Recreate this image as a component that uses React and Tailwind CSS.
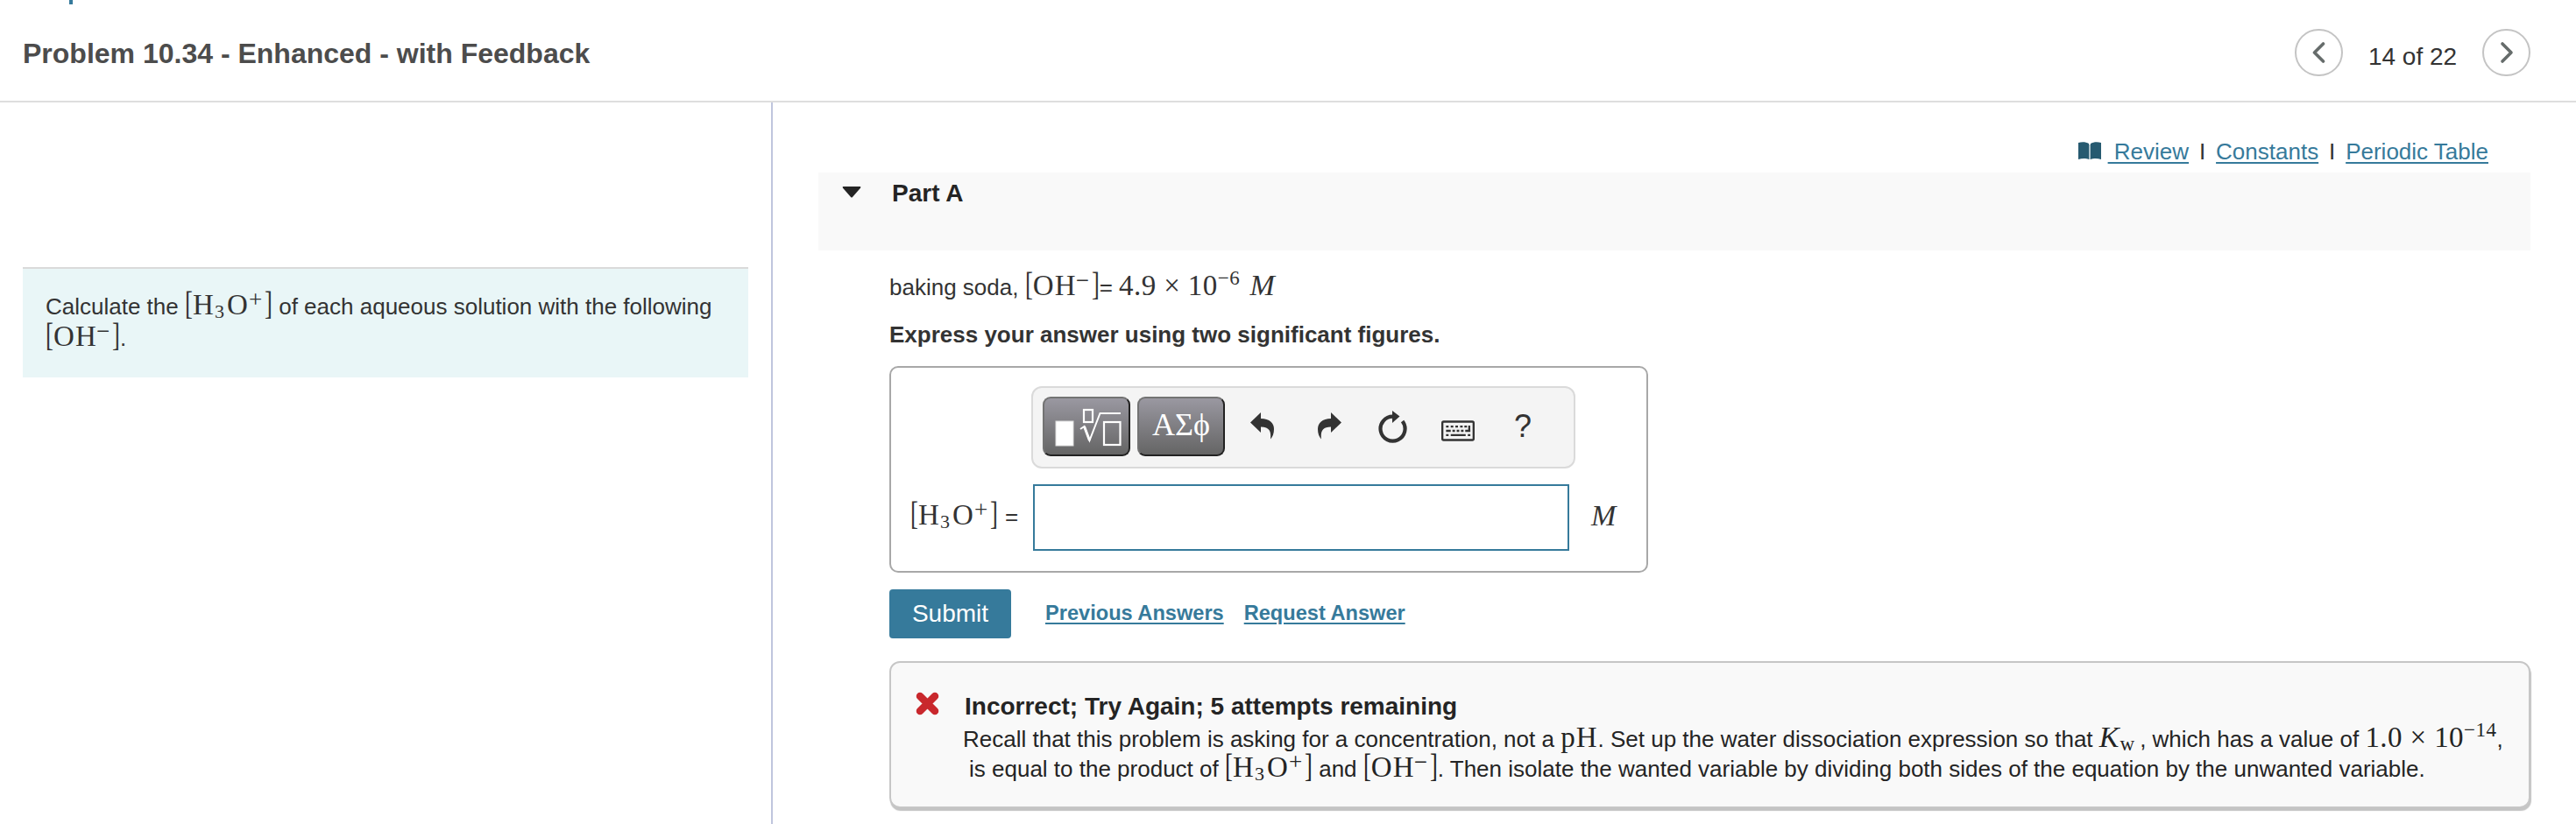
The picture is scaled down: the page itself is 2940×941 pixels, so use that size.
const Bracket = ({ children }) => (
  <span className="inline-block w-[9px] origin-left scale-x-[0.72] text-[37px] leading-0">
    {children}
  </span>
);

const Sup = ({ children }) => (
  <span className="relative -top-3 text-[23px] tracking-[0.5px] leading-0">
    {children}
  </span>
);

const Formula = ({ children }) => (
  <span className="whitespace-nowrap font-['Liberation_Serif',serif] text-[33px] leading-0">
    {children}
  </span>
);

const Hydronium = () => (
  <Formula>
    <Bracket>[</Bracket>
    <span className="inline-block w-[25px]">H</span>
    <span className="relative top-1 inline-block w-[14px] text-[22px]">3</span>
    <span className="inline-block w-[25px]">O</span>
    <span className="relative -top-2 inline-block w-[18px] text-[27px]">+</span>
    <Bracket>]</Bracket>
  </Formula>
);

const Hydroxide = () => (
  <Formula>
    <Bracket>[</Bracket>
    <span className="inline-block w-[25px]">O</span>
    <span className="inline-block w-[24px]">H</span>
    <span className="relative -top-2 inline-block w-[18px] text-[27px]">−</span>
    <Bracket>]</Bracket>
  </Formula>
);

const NavButton = ({ d, label }) => (
  <button
    aria-label={label}
    className="flex h-[54px] w-[55px] items-center justify-center rounded-full border-2 border-[#c4c4c4]"
  >
    <svg width="16" height="26" viewBox="0 0 16 26" fill="none">
      <path
        d={d}
        stroke="#666c6b"
        strokeWidth="3.6"
        strokeLinecap="round"
        strokeLinejoin="round"
      />
    </svg>
  </button>
);

const Header = () => (
  <header className="flex h-[117px] justify-between border-b-2 border-[#dedede] pl-[26px] pr-[52px]">
    <div>
      <div className="ml-[53px] h-[5px] w-1 bg-[#367a9b]"></div>
      <h1 className="mt-[38px] text-[32px] leading-9 font-bold text-[#4c4c4c]">
        Problem 10.34 - Enhanced - with Feedback
      </h1>
    </div>
    <div className="mt-[33px] flex h-[54px]">
      <NavButton label="Previous" d="M12.5 3 L2.5 13 L12.5 23" />
      <span className="w-[159px] pt-[5px] text-center text-[28px] leading-[54px]">
        14 of 22
      </span>
      <NavButton label="Next" d="M3 3 L13 13 L3 23" />
    </div>
  </header>
);

const Prompt = () => (
  <aside className="h-[824px] w-[882px] shrink-0 border-r-2 border-[#bfc5dd] pl-[26px] pt-[188px]">
    <div className="h-[126px] w-[828px] border-t-2 border-[#dadada] bg-[#e9f6f7] pl-[26px] pt-[25px] text-[26px] leading-9">
      <p>
        Calculate the <Hydronium /> of each aqueous solution with the following
      </p>
      <p>
        <Hydroxide />.
      </p>
    </div>
  </aside>
);

const linkStyle =
  "text-[#367a9b] underline decoration-2 underline-offset-[3px]";

const Resources = () => (
  <nav className="flex h-[80px] items-start justify-end pr-[48px] pt-[38px] text-[26px] leading-9">
    <svg
      className="mr-[8px] mt-[7px]"
      width="26"
      height="21"
      viewBox="0 0 26 21"
      fill="#265a70"
    >
      <path d="M0 1 C4 -0.3 9 0 12 2 V20 C9 18.6 4 18.6 0 20 Z" />
      <path d="M26 1 C22 -0.3 17 0 14 2 V20 C17 18.6 22 18.6 26 20 Z" />
      <path d="M12 3 H14 V20 H12 Z" fill="#a9bfc8" />
    </svg>
    <a className={`${linkStyle} whitespace-pre`}> Review</a>
    <span className="w-[31px] text-center">I</span>
    <a className={linkStyle}>Constants</a>
    <span className="w-[31px] text-center">I</span>
    <a className={linkStyle}>Periodic Table</a>
  </nav>
);

const PartHeader = () => (
  <div className="flex h-[89px] bg-[#f9f9f9] pl-[27px] pt-[3px]">
    <svg className="mt-[13px]" width="22" height="13" viewBox="0 0 22 13">
      <path
        d="M1.5 0 H20.5 Q22 0 21 1.8 L12 12 Q11 13 10 12 L1 1.8 Q0 0 1.5 0 Z"
        fill="#242424"
      />
    </svg>
    <h2 className="ml-[35px] text-[28px] leading-[42px] font-bold text-[#242424]">
      Part A
    </h2>
  </div>
);

const keyStyle =
  "flex h-[68px] w-[100px] items-center justify-center rounded-[9px] border-2 border-t-[#737373] border-l-[#737373] border-r-[#222] border-b-[#222] bg-linear-to-b from-[#9a98a1] to-[#656565]";

const UndoArrow = ({ className }) => (
  <svg className={className} width="27" height="31" viewBox="0 0 27 31" fill="#333">
    <path d="M0 11.5 L12 0 V7 C22 7 27 12 27 19 C27 24 25.5 28 23 30.5 C24 22 22 16.5 12 16.5 V23 Z" />
  </svg>
);

const Toolbar = () => (
  <div className="ml-[160px] flex h-[94px] w-[621px] items-start rounded-[12px] border-2 border-[#dadada] bg-[#f4f4f4] pl-[11px] pt-[10px]">
    <button className={keyStyle}>
      <svg
        className="ml-[3px] mt-px"
        width="76"
        height="44"
        viewBox="0 0 76 44"
        fill="none"
        stroke="#fff"
      >
        <rect x="1" y="15" width="20" height="28" fill="#fff" stroke="#ddd" />
        <rect x="33" y="2" width="10" height="14" strokeWidth="2.2" />
        <path d="M29 24 L33.5 21 L39.5 37 L51.5 6 H75" strokeWidth="2" />
        <path d="M33.5 21 L39.5 37" strokeWidth="3" />
        <rect x="56" y="16" width="18.5" height="26" strokeWidth="2.2" />
      </svg>
    </button>
    <button
      className={`${keyStyle} ml-[8px] pb-[4px] font-['Liberation_Serif',serif] text-[36px] leading-none text-white`}
    >
      ΑΣϕ
    </button>
    <UndoArrow className="ml-[29px] mt-[18px]" />
    <UndoArrow className="ml-[50px] mt-[18px] -scale-x-100" />
    <svg className="ml-[42px] mt-[16px]" width="33" height="37" viewBox="0 0 33 37">
      <path
        d="M27.6 12 A14 14 0 1 1 17 6.6"
        fill="none"
        stroke="#333"
        strokeWidth="4.2"
      />
      <path d="M16 0 L24.5 6.5 L16 14 Z" fill="#333" />
    </svg>
    <svg className="ml-[39px] mt-[27px]" width="38" height="24" viewBox="0 0 39 24">
      <rect
        x="1.2"
        y="1.2"
        width="36.6"
        height="21.6"
        rx="1.5"
        fill="none"
        stroke="#333"
        strokeWidth="2.4"
      />
      <path
        d="M5.5 7 H8.5 M11 7 H14 M16.5 7 H19.5 M22 7 H25 M27 7 H30 M5.5 12 H11 M13 12 H16 M18 12 H21 M23 12 H26 M28 12 H34 M32.7 5.8 V13 M5.5 17 H8.5 M11 17 H28.5 M31 17 H34"
        fill="none"
        stroke="#333"
        strokeWidth="2.4"
      />
    </svg>
    <span className="ml-[45px] mt-[11px] text-[36px] leading-[46px]">?</span>
  </div>
);

const AnswerBox = () => (
  <div className="mt-[18px] h-[236px] w-[866px] rounded-[10px] border-2 border-[#a8a8a8] pt-[21px]">
    <Toolbar />
    <div className="mt-[18px] flex h-[76px] text-[26px] leading-9">
      <label className="w-[162px] pl-[22px] pt-[19px]">
        <Hydronium />
        <span className="ml-[8px]">=</span>
      </label>
      <input className="h-[76px] w-[612px] border-2 border-[#367a9b] bg-white" />
      <span className="ml-[25px] pt-[20px]">
        <Formula>
          <i className="text-[34px]">M</i>
        </Formula>
      </span>
    </div>
  </div>
);

const Actions = () => (
  <div className="mt-[19px] flex h-[56px]">
    <button className="w-[139px] rounded-[4px] bg-[#367a9b] text-[28px] text-white">
      Submit
    </button>
    <div className="flex gap-[23px] pl-[39px] pt-[9px] text-[23.6px] leading-9 font-bold">
      <a className={linkStyle}>Previous Answers</a>
      <a className={linkStyle}>Request Answer</a>
    </div>
  </div>
);

const Feedback = () => (
  <section className="mt-[26px] flex h-[168px] w-[1873px] rounded-[12px] border-2 border-[#c6c6c6] bg-[#f9f9f9] pl-[28px] text-[#242424] shadow-[1px_3px_1px_#c4c4c4]">
    <svg className="mt-[33px] shrink-0" width="27" height="27" viewBox="0 0 27 27">
      <path
        d="M5 5 L22 22 M22 5 L5 22"
        stroke="#c9282d"
        strokeWidth="8.5"
        strokeLinecap="round"
      />
    </svg>
    <div className="ml-[27px] pt-[30px] whitespace-nowrap">
      <h3 className="ml-[2px] text-[28px] leading-10 font-bold">
        Incorrect; Try Again; 5 attempts remaining
      </h3>
      <p className="text-[26px] leading-[34px]">
        Recall that this problem is asking for a concentration, not a{" "}
        <Formula>
          <span className="tracking-[1px]">pH</span>
        </Formula>
        . Set up the water dissociation expression so that{" "}
        <Formula>
          <i className="mr-px text-[34px]">K</i>
          <span className="relative top-1 mr-[6px] text-[23px]">w</span>
        </Formula>
        , which has a value of{" "}
        <Formula>
          <span className="tracking-[0.4px]">1.0 × 10</span>
          <Sup>−14</Sup>
        </Formula>
        ,
      </p>
      <p className="ml-[7px] text-[26px] leading-[34px]">
        is equal to the product of <Hydronium /> and <Hydroxide />. Then isolate
        the wanted variable by dividing both sides of the equation by the
        unwanted variable.
      </p>
    </div>
  </section>
);

const App = () => {
  return (
    <div className="h-[941px] w-[2940px] overflow-hidden bg-white font-['Liberation_Sans',Arial,sans-serif] text-[#333]">
      <Header />
      <div className="flex">
        <Prompt />
        <main className="w-[2006px] pl-[52px]">
          <Resources />
          <PartHeader />
          <div className="pl-[81px]">
            <p className="mt-[24px] text-[26px] leading-9">
              baking soda, <Hydroxide />={" "}
              <Formula>
                <span className="tracking-[0.4px]">4.9 × 10</span>
                <Sup>−6</Sup> <i className="ml-[3px] text-[34px]">M</i>
              </Formula>
            </p>
            <p className="mt-[18px] text-[26px] leading-9 font-bold">
              Express your answer using two significant figures.
            </p>
            <AnswerBox />
            <Actions />
            <Feedback />
          </div>
        </main>
      </div>
    </div>
  );
};

export default App;
